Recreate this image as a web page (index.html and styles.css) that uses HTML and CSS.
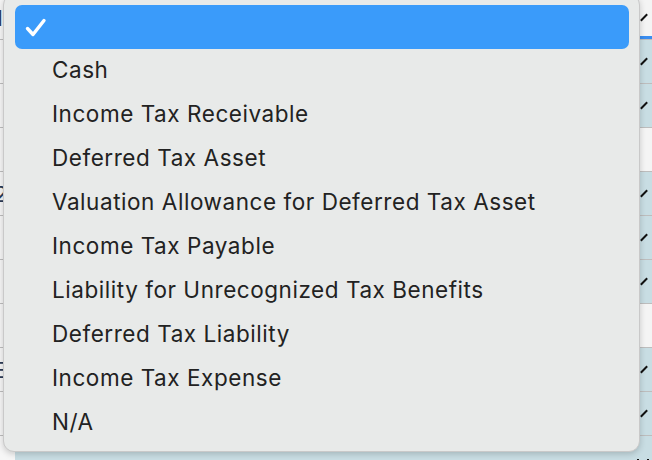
FILE: index.html
```html
<!DOCTYPE html>
<html>
<head>
<meta charset="utf-8">
<link rel="stylesheet" href="styles.css">
</head>
<body>
<div class="sheet">
  <div class="row"><div class="lcell"><span>1</span></div><div class="mid"></div><div class="rcell sel"><i class="tick"></i></div></div>
  <div class="row"><div class="lcell"></div><div class="mid"></div><div class="rcell blue"><i class="tick"></i></div></div>
  <div class="row"><div class="lcell"></div><div class="mid"></div><div class="rcell blue"><i class="tick"></i></div></div>
  <div class="row"><div class="lcell"></div><div class="mid"></div><div class="rcell"></div></div>
  <div class="row"><div class="lcell"><span>2</span></div><div class="mid"></div><div class="rcell blue"><i class="tick"></i></div></div>
  <div class="row"><div class="lcell"></div><div class="mid"></div><div class="rcell blue"><i class="tick"></i></div></div>
  <div class="row"><div class="lcell"></div><div class="mid"></div><div class="rcell blue"><i class="tick"></i></div></div>
  <div class="row"><div class="lcell"></div><div class="mid"></div><div class="rcell"></div></div>
  <div class="row"><div class="lcell"><span>E</span></div><div class="mid"></div><div class="rcell blue"><i class="tick"></i></div></div>
  <div class="row"><div class="lcell"></div><div class="mid"></div><div class="rcell blue"><i class="tick"></i></div></div>
  <div class="row last"><div class="lcell"></div><div class="mid blue"></div><div class="rcell blue"><i class="cross"></i></div></div>
</div>

<div class="menu">
  <div class="item active">
    <svg class="check" width="22" height="20" viewBox="0 0 22 20"><path d="M2.5 10.5 L8 16.5 L19 2.5" fill="none" stroke="#fff" stroke-width="3.4" stroke-linecap="round" stroke-linejoin="round"/></svg>
  </div>
  <div class="item">Cash</div>
  <div class="item">Income Tax Receivable</div>
  <div class="item">Deferred Tax Asset</div>
  <div class="item">Valuation Allowance for Deferred Tax Asset</div>
  <div class="item">Income Tax Payable</div>
  <div class="item">Liability for Unrecognized Tax Benefits</div>
  <div class="item">Deferred Tax Liability</div>
  <div class="item">Income Tax Expense</div>
  <div class="item">N/A</div>
</div>
</body>
</html>
```
FILE: styles.css
```css
html, body {
  margin: 0;
  padding: 0;
}
body {
  width: 652px;
  height: 460px;
  overflow: hidden;
  position: relative;
  background: #f4f4f4;
  font-family: "Inter", "Noto Sans", sans-serif;
}
.sheet {
  display: flex;
  flex-direction: column;
  margin-top: -4px;
}
.row {
  display: flex;
  height: 44px;
  flex: none;
  box-sizing: border-box;
  border-bottom: 1px solid #bdbdbd;
}
.lcell {
  width: 15px;
  background: #f6f6f6;
  color: #2b3a55;
  font-size: 22px;
  line-height: 44px;
  overflow: hidden;
  display: flex;
}
.lcell span {
  margin-left: -6px;
}
.mid {
  flex: 1;
  background: #f7f7f7;
}
.rcell {
  width: 14px;
  background: #f4f4f4;
  box-sizing: border-box;
  display: flex;
  align-items: center;
  padding-left: 5px;
}
.rcell.blue, .mid.blue {
  background: #c8dde3;
}
.rcell.sel {
  background: #f4f4f4;
  border-top: 3px solid #3a8df0;
  border-bottom: 3px solid #3a8df0;
}
.tick {
  display: block;
  width: 2px;
  height: 9px;
  background: #111;
  transform: rotate(45deg);
}
.cross {
  display: block;
  width: 12px;
  height: 12px;
  margin-top: 14px;
  margin-left: -6px;
  background:
    linear-gradient(45deg, transparent 44%, #111 44%, #111 56%, transparent 56%),
    linear-gradient(-45deg, transparent 44%, #111 44%, #111 56%, transparent 56%);
}
.menu {
  position: absolute;
  left: 3px;
  top: -6px;
  width: 637px;
  height: 458px;
  box-sizing: border-box;
  padding: 10px 10px 0 11px;
  background: #e8eae9;
  border: 1px solid #c9c9c9;
  border-radius: 11px;
  box-shadow: 0 2px 6px rgba(0,0,0,0.18);
  display: flex;
  flex-direction: column;
}
.item {
  height: 44px;
  flex: none;
  box-sizing: border-box;
  display: flex;
  align-items: center;
  padding-left: 37px;
  padding-bottom: 3px;
  font-size: 22.5px;
  letter-spacing: 0.55px;
  color: #222;
  border-radius: 7px;
  position: relative;
}
.item.active {
  background: #3a9bfa;
}
.check {
  position: absolute;
  left: 10px;
  top: 13px;
}
```
